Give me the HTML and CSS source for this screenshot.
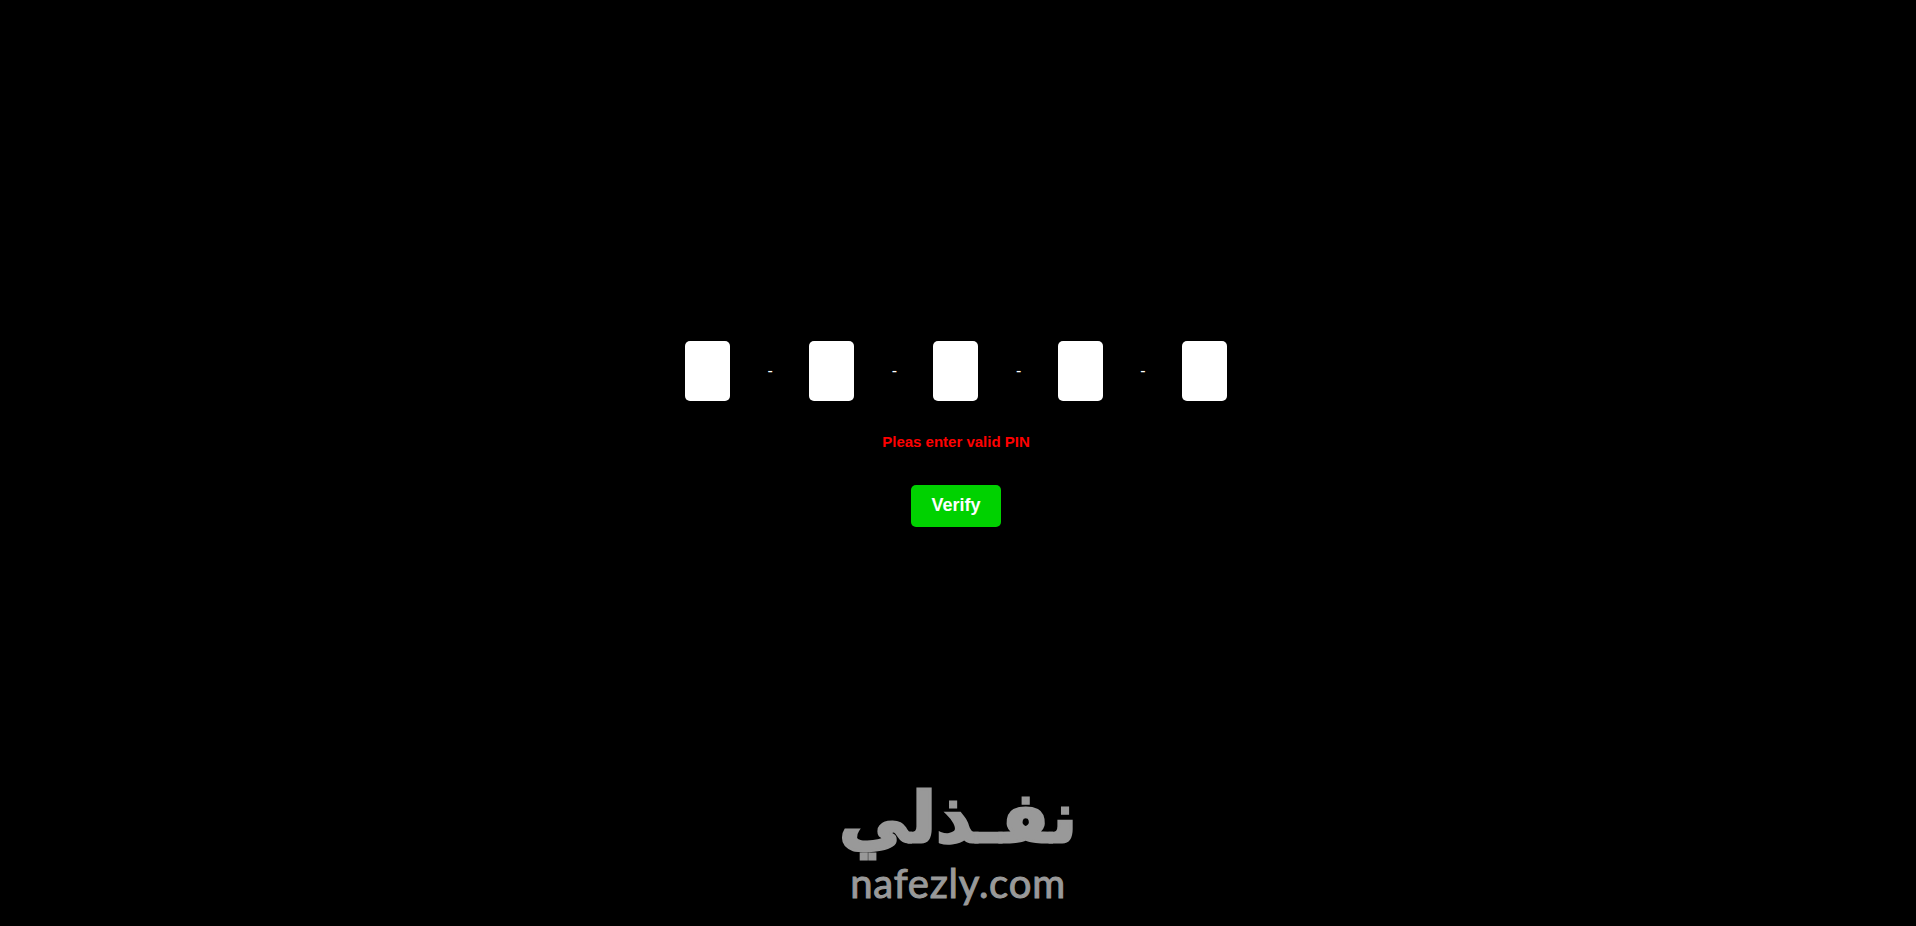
FILE: index.html
```html
<!DOCTYPE html>
<html lang="en">
<head>
<meta charset="utf-8">
<title>Verify PIN</title>
<link rel="stylesheet" href="styles.css">
</head>
<body>
<main class="page">
  <form class="pin-form">
    <div class="pin-row">
      <input class="pin-box" type="text" maxlength="1" aria-label="Digit 1">
      <span class="pin-dash">-</span>
      <input class="pin-box" type="text" maxlength="1" aria-label="Digit 2">
      <span class="pin-dash">-</span>
      <input class="pin-box" type="text" maxlength="1" aria-label="Digit 3">
      <span class="pin-dash">-</span>
      <input class="pin-box" type="text" maxlength="1" aria-label="Digit 4">
      <span class="pin-dash">-</span>
      <input class="pin-box" type="text" maxlength="1" aria-label="Digit 5">
    </div>
    <p class="pin-error">Pleas enter valid PIN</p>
    <button class="verify" type="button"><span class="verify-label">Verify</span></button>
  </form>
  <div class="logo">
    <div class="logo-ar" lang="ar" dir="rtl">نفـذلي</div>
    <div class="logo-en">nafezly.com</div>
  </div>
</main>
</body>
</html>
```
FILE: styles.css
```css
* { box-sizing: border-box; }
html, body { margin: 0; height: 100%; background: #000; }
body { font-family: "Liberation Sans", Arial, sans-serif; overflow: hidden; }
.page {
  height: 926px;
  display: flex;
  flex-direction: column;
  align-items: center;
}
.pin-form {
  margin-top: 341px;
  margin-right: 4px;
  display: flex;
  flex-direction: column;
  align-items: center;
}
.pin-row {
  width: 542px;
  height: 60px;
  display: flex;
  justify-content: space-between;
  align-items: center;
}
.pin-box {
  width: 45px;
  height: 60px;
  padding: 0;
  border: 0;
  border-radius: 5px;
  background: #fff;
  outline: none;
}
.pin-dash { margin: 0 -0.5px 0 0.5px; color: #fff; font-size: 16px; line-height: 18px; }
.pin-error {
  margin: 33px 0 0;
  color: #f00;
  font-size: 15px;
  line-height: 16px;
  font-weight: 700;
}
.verify {
  margin-top: 35px;
  width: 90px;
  height: 42px;
  padding: 0 0 2px;
  border: 0;
  border-radius: 5px;
  background: #00d200;
  color: #fff;
  font: 700 18px/20px "Liberation Sans", Arial, sans-serif;
}
.logo {
  margin-top: 248px;
  width: 240px;
  display: flex;
  flex-direction: column;
  align-items: center;
  color: #999;
}
.logo-ar {
  font-family: "DejaVu Sans", sans-serif;
  font-weight: 700;
  font-size: 70px;
  line-height: 86px;
  white-space: nowrap;
  -webkit-text-stroke: 3px #999;
}
.logo-en {
  margin-top: 1px;
  font-family: "Lato", sans-serif;
  font-weight: 400;
  font-size: 40px;
  line-height: 42px;
  letter-spacing: 0.8px;
  white-space: nowrap;
  -webkit-text-stroke: 1px #999;
}
```
